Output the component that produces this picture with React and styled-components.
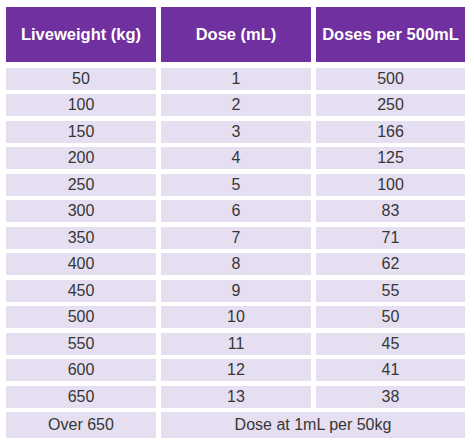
import React from 'react';
import styled, { createGlobalStyle } from 'styled-components';

const GlobalStyle = createGlobalStyle`
  body {
    margin: 0;
    background: #ffffff;
    font-family: 'Liberation Sans', Arial, sans-serif;
  }
`;

const Table = styled.div`
  display: grid;
  grid-template-columns: 150px 150px 149px;
  grid-template-rows: 56px repeat(13, 22px) 26px;
  column-gap: 5px;
  row-gap: 4.5px;
  padding: 7px 0 0 6px;
`;

const HeadCell = styled.div`
  background: #7030a0;
  color: #ffffff;
  font-weight: 700;
  font-size: 16.5px;
  height: 55px;
  display: flex;
  align-items: center;
  justify-content: center;
`;

const Cell = styled.div`
  background: #e6dff2;
  color: #363636;
  font-size: 16px;
  display: flex;
  align-items: center;
  justify-content: center;
  grid-column: ${(p) => (p.$span ? `span ${p.$span}` : 'auto')};
`;

const rows = [
  [50, 1, 500],
  [100, 2, 250],
  [150, 3, 166],
  [200, 4, 125],
  [250, 5, 100],
  [300, 6, 83],
  [350, 7, 71],
  [400, 8, 62],
  [450, 9, 55],
  [500, 10, 50],
  [550, 11, 45],
  [600, 12, 41],
  [650, 13, 38],
];

export default function App() {
  return (
    <>
      <GlobalStyle />
      <Table>
        <HeadCell>Liveweight (kg)</HeadCell>
        <HeadCell>Dose (mL)</HeadCell>
        <HeadCell>Doses per 500mL</HeadCell>
        {rows.map((r) => (
          <React.Fragment key={r[0]}>
            <Cell>{r[0]}</Cell>
            <Cell>{r[1]}</Cell>
            <Cell>{r[2]}</Cell>
          </React.Fragment>
        ))}
        <Cell>Over 650</Cell>
        <Cell $span={2}>Dose at 1mL per 50kg</Cell>
      </Table>
    </>
  );
}
